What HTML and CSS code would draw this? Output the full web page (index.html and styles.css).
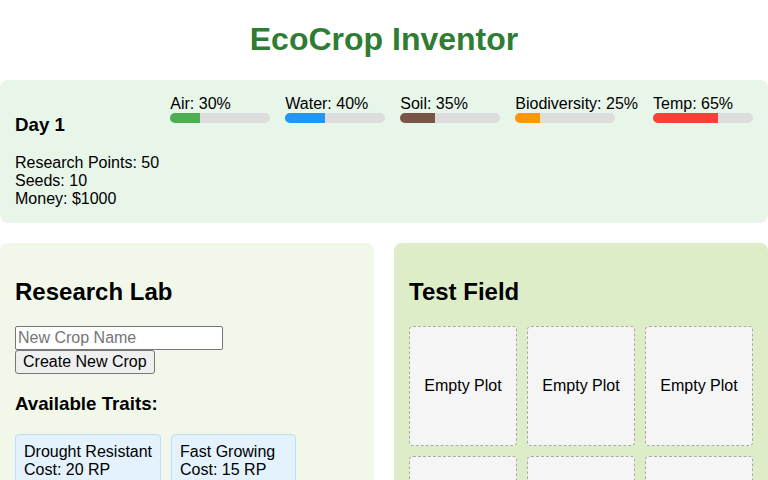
FILE: index.html
```html
<!DOCTYPE html>
<html lang="en">
<head>
<meta charset="utf-8">
<title>EcoCrop Inventor</title>
<link rel="stylesheet" href="styles.css">
</head>
<body>
<h1 class="title">EcoCrop Inventor</h1>
<section class="status">
  <div class="stats">
    <h3 class="day">Day 1</h3>
    <div>Research Points: 50</div>
    <div>Seeds: 10</div>
    <div>Money: $1000</div>
  </div>
  <div class="meters">
    <div class="meter"><div class="meter-label">Air: 30%</div><div class="bar"><div class="fill air" style="width:30%"></div></div></div>
    <div class="meter"><div class="meter-label">Water: 40%</div><div class="bar"><div class="fill water" style="width:40%"></div></div></div>
    <div class="meter"><div class="meter-label">Soil: 35%</div><div class="bar"><div class="fill soil" style="width:35%"></div></div></div>
    <div class="meter"><div class="meter-label">Biodiversity: 25%</div><div class="bar"><div class="fill bio" style="width:25%"></div></div></div>
    <div class="meter"><div class="meter-label">Temp: 65%</div><div class="bar"><div class="fill temp" style="width:65%"></div></div></div>
  </div>
</section>
<main class="main">
  <section class="panel lab">
    <h2>Research Lab</h2>
    <input class="crop-name" type="text" placeholder="New Crop Name">
    <button class="create">Create New Crop</button>
    <h3>Available Traits:</h3>
    <div class="traits">
      <div class="trait">Drought Resistant<br>Cost: 20 RP</div>
      <div class="trait trait-wide">Fast Growing<br>Cost: 15 RP</div>
    </div>
  </section>
  <section class="panel field">
    <h2>Test Field</h2>
    <div class="plots">
      <div class="plot">Empty Plot</div>
      <div class="plot">Empty Plot</div>
      <div class="plot">Empty Plot</div>
      <div class="plot">Empty Plot</div>
      <div class="plot">Empty Plot</div>
      <div class="plot">Empty Plot</div>
    </div>
  </section>
</main>
</body>
</html>
```
FILE: styles.css
```css
body {
  margin: 0;
  font-family: "Liberation Sans", Arial, sans-serif;
  font-size: 16px;
  color: #000;
  background: #fff;
}
.title {
  text-align: center;
  color: #2e7d32;
  font-size: 32px;
  margin: 21.44px 0;
}
.status {
  display: flex;
  justify-content: space-between;
  align-items: flex-start;
  background: #e8f5e9;
  border-radius: 8px;
  padding: 15px;
  margin-bottom: 20px;
}
.day {
  font-size: 18.72px;
  margin: 18.72px 0;
}
.meters {
  display: flex;
  gap: 15px;
}
.meter {
  min-width: 100px;
}
.bar {
  width: 100px;
  height: 10px;
  border-radius: 5px;
  background: #ddd;
  overflow: hidden;
}
.fill { height: 100%; }
.air { background: #4caf50; }
.water { background: #2196f3; }
.soil { background: #795548; }
.bio { background: #ff9800; }
.temp { background: #f44336; }
.main {
  display: grid;
  grid-template-columns: 1fr 1fr;
  gap: 20px;
}
.panel {
  border-radius: 8px;
  padding: 15px;
  min-height: 400px;
}
.lab { background: #f1f8e9; }
.field { background: #dcedc8; }
.panel h2 {
  font-size: 24px;
  margin: 19.92px 0;
}
.panel h3 {
  font-size: 18.72px;
  margin: 18.72px 0;
}
.crop-name {
  display: block;
  font: inherit;
  width: 208px;
  height: 24px;
  box-sizing: border-box;
  padding: 1px 2px;
  border: 1px solid #767676;
  border-radius: 2px;
  margin: 0;
  background: #fff;
}
.crop-name::placeholder { color: #757575; }
.create {
  display: block;
  font: inherit;
  margin: 0;
  padding: 1px 7px;
  height: 24px;
  border: 1px solid #767676;
  border-radius: 3px;
  background: #efefef;
  color: #000;
}
.traits {
  display: flex;
  flex-wrap: wrap;
  gap: 10px;
}
.trait {
  background: #e3f2fd;
  border: 1px solid #bbdefb;
  border-radius: 4px;
  padding: 8px;
}
.trait-wide {
  min-width: 125px;
  box-sizing: border-box;
}
.plots {
  display: grid;
  grid-template-columns: repeat(3, 1fr);
  gap: 10px;
}
.plot {
  height: 120px;
  box-sizing: border-box;
  background: #f5f5f5;
  border: 1px dashed #aaa;
  border-radius: 4px;
  display: flex;
  align-items: center;
  justify-content: center;
}
```
